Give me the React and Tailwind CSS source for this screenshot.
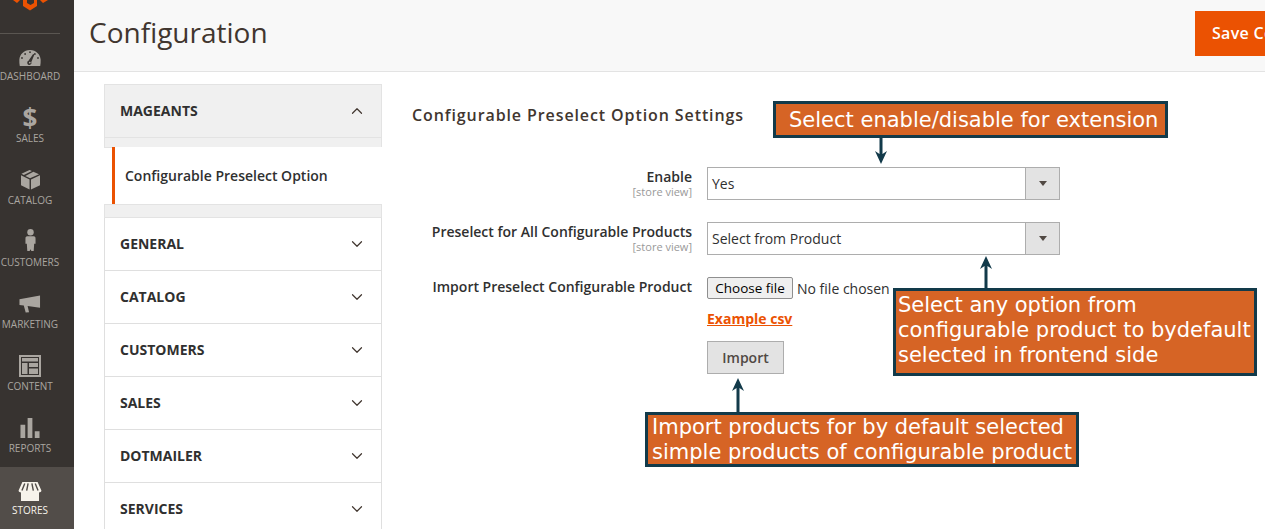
import { ChevronDown, ChevronUp } from 'lucide-react';

const SECTIONS = ['GENERAL', 'CATALOG', 'CUSTOMERS', 'SALES', 'DOTMAILER', 'SERVICES'];

const iconFill = '#aaa6a0';

const NAV = [
  {
    label: 'DASHBOARD',
    icon: (
      <svg width="22" height="16" viewBox="0 0 24 18" fill={iconFill} className="mt-[4px]">
        <path fillRule="evenodd" d="M12 0C5 0 .5 5 0 11c-.1 2.500.1 5 .5 7h23c.4-2 .6-4.500.5-7C23.500 5 19 0 12 0zM12 1.500a1 1 0 110 2 1 1 0 010-2zM6.500 3.500a1 1 0 110 2 1 1 0 010-2zM3 8a1 1 0 110 2 1 1 0 010-2zM21 8a1 1 0 110 2 1 1 0 010-2zM17.500 3.500a1 1 0 110 2 1 1 0 010-2z" />
        <path d="M15.500 4.500l1.500.7-3.500 8.300a2.400 2.400 0 11-3.200-1.300z" fill="#373330" />
        <circle cx="11.800" cy="14.200" r="1" fill={iconFill} />
      </svg>
    ),
  },
  {
    label: 'SALES',
    icon: <span className="text-[26px] leading-[26px] font-bold text-[#aaa6a0]">$</span>,
  },
  {
    label: 'CATALOG',
    icon: (
      <svg width="19" height="20" viewBox="0 0 20 21" fill={iconFill}>
        <path d="M9 0L.5 4l2.500 1.300L11.500 1zM13 1.800L4.600 6.200 9.500 8.700 19 4.500zM0 5.500l9 4.500v10.500L0 16zM10.500 10L20 5.500V16l-9.500 4.500z" />
      </svg>
    ),
  },
  {
    label: 'CUSTOMERS',
    icon: (
      <svg width="11" height="24" viewBox="0 0 12 24" fill={iconFill} className="mb-[5px]">
        <circle cx="6" cy="3.500" r="3.500" />
        <path d="M2.500 8h7c1.500 0 2 1 2 2.500V16H10l-.5 8H7l-1-2-1 2H2.500L2 16H.5v-5.500C.5 9 1 8 2.500 8z" />
      </svg>
    ),
  },
  {
    label: 'MARKETING',
    icon: (
      <svg width="22" height="18" viewBox="0 0 23 18" fill={iconFill}>
        <path d="M22 0v13L9 11l1.500 6.500-3.500.5-2-7.500-4.500-.5V4z" />
      </svg>
    ),
  },
  {
    label: 'CONTENT',
    icon: (
      <svg width="22" height="22" viewBox="0 0 22 22" fill={iconFill}>
        <path fillRule="evenodd" d="M0 0h22v22H0zM2 2v18h18V2z" />
        <path d="M3 3h16v3.500H3zM3 8h5.500v11H3zM10 8h9v4h-9zM10 13.500h9V19h-9z" />
      </svg>
    ),
  },
  {
    label: 'REPORTS',
    icon: (
      <svg width="20" height="20" viewBox="0 0 20 21" fill={iconFill}>
        <path d="M0 7h5v14H0zM7.500 0h5v21h-5zM15 14h5v7h-5z" />
      </svg>
    ),
  },
  {
    label: 'STORES',
    active: true,
    icon: (
      <svg width="24" height="19" viewBox="0 0 24 20" fill="#f7f3eb" className="mt-[2px]">
        <path d="M4 0h16l4 9c0 1.500-1.500 2-2.500 2v9h-19v-9C1.500 11 0 10.500 0 9z" />
        <path d="M6.500 1.500L3.500 9M10 1.500L8.500 9M14 1.500L15.500 9M17.500 1.500L20.500 9" stroke="#524d49" strokeWidth="1.500" fill="none" />
      </svg>
    ),
  },
];

function Sidebar() {
  return (
    <aside className="w-[74px] shrink-0 bg-[#373330] flex flex-col h-[529px] overflow-hidden">
      <div className="h-[34px] relative shrink-0 border-b border-[#5a5651] mr-[14px]">
        <svg className="absolute left-[13px] top-0" width="35" height="11" viewBox="0 0 35 11">
          <path d="M0 0h7L4 3zM27 0h8l-5 3zM10 0h4v3l3.500 2L21 3V0h3v6l-7 4.500L10 6z" fill="#eb5202" />
        </svg>
      </div>
      <nav className="flex flex-col -mt-[1px]">
        {NAV.map((n) => (
          <div
            key={n.label}
            className={`flex flex-col items-center h-[62px] pt-[10px] pr-[14px] ${
              n.active ? 'bg-[#524d49] text-[#f7f3eb]' : 'text-[#aaa6a0]'
            }`}
          >
            <div className="flex items-center justify-center h-[26px]">{n.icon}</div>
            <span className="text-[10px] leading-[14px] whitespace-nowrap">{n.label}</span>
          </div>
        ))}
      </nav>
    </aside>
  );
}

function SectionRow({ title }) {
  return (
    <div className="h-[53px] shrink-0 border-b border-[#dfdfdf] flex items-center justify-between pl-[15px] pr-[15px] pb-[2px] bg-white">
      <span className="font-bold text-[14px] text-[#303030]">{title}</span>
      <ChevronDown size={18} strokeWidth={1.600} className="text-[#41362f] mt-[2px]" />
    </div>
  );
}

function ConfigTabs() {
  return (
    <div className="w-[278px] shrink-0 flex flex-col">
      <div className="h-[54px] bg-[#f0f0f0] border border-[#e3e3e3] flex items-center justify-between pl-[15px] pr-[15px] pb-[2px]">
        <span className="font-bold text-[14px] text-[#303030]">MAGEANTS</span>
        <ChevronUp size={18} strokeWidth={1.600} className="text-[#41362f] mt-[2px]" />
      </div>
      <div className="h-[10px] bg-[#f0f0f0] border-x border-b border-[#e3e3e3]" />
      <div className="h-[58px] -mt-[1px] ml-[8px] border-l-[3px] border-[#eb5202] bg-white flex items-center pl-[10px] pb-[2px] text-[14px] font-semibold text-[#303030]">
        Configurable Preselect Option
      </div>
      <div className="h-[14px] -mt-[1px] bg-[#f0f0f0] border border-[#e3e3e3]" />
      <div className="flex flex-col border-x border-[#dfdfdf]">
        {SECTIONS.map((s) => (
          <SectionRow key={s} title={s} />
        ))}
      </div>
    </div>
  );
}

function FakeSelect({ value }) {
  return (
    <div className="w-[353px] h-[33px] border border-[#adadad] bg-white flex text-[14px] text-[#303030]">
      <span className="flex-1 pl-[4px] leading-[31px]">{value}</span>
      <span className="w-[34px] bg-[#e3e3e3] border-l border-[#adadad] flex items-center justify-center">
        <span className="w-0 h-0 border-x-[4px] border-x-transparent border-t-[5px] border-t-[#514943]" />
      </span>
    </div>
  );
}

function Label({ text, scope }) {
  return (
    <div className="w-[280px] text-right">
      <div className="text-[14px] leading-[19px] font-semibold text-[#303030]">{text}</div>
      {scope && <div className="text-[11px] leading-[12px] text-[#999]">[store view]</div>}
    </div>
  );
}

function Callout({ className, children }) {
  return (
    <div className={`absolute border-[3px] border-[#123a4a] bg-[#d66425] text-white font-['DejaVu_Sans',sans-serif] text-[21px] leading-[25px] whitespace-nowrap ${className}`}>
      {children}
    </div>
  );
}

// h is the drawn length of the arrow, tip included
function Arrow({ className, h, down }) {
  const shaft = h - 10;
  return (
    <svg className={`absolute ${className}`} width="12" height={h} viewBox={`0 0 12 ${h}`} fill="#123a4a">
      {down ? (
        <path d={`M4.500 0h3v${shaft}l4.500-3-6 ${13}-6-${13} 4.500 3z`} />
      ) : (
        <path d={`M4.500 ${h}h3V10l4.500 3-6-13-6 13 4.500-3z`} />
      )}
    </svg>
  );
}

export default function App() {
  return (
    <div className="relative w-[1265px] h-[529px] overflow-hidden flex bg-white font-['Open_Sans',sans-serif]">
      <Sidebar />
      <main className="flex-1 min-w-0 flex flex-col">
        <header className="h-[72px] shrink-0 bg-[#f8f8f8] border-b border-[#e3e3e3] flex items-center justify-between pl-[15px]">
          <h1 className="text-[28px] text-[#41362f] leading-[36px] mb-[8px]">Configuration</h1>
          <button className="w-[70px] h-[45px] mb-[5px] bg-[#eb5202] text-white font-semibold text-[16px] tracking-[0.3px] pl-[17px] text-left whitespace-nowrap overflow-hidden">
            Save Config
          </button>
        </header>
        <div className="flex pl-[30px] pt-[12px]">
          <ConfigTabs />
          <section className="pl-[30px] pt-[20px] flex flex-col">
            <h2 className="text-[16px] leading-[22px] font-semibold tracking-[0.9px] text-[#41362f]">
              Configurable Preselect Option Settings
            </h2>
            <div className="mt-[41px] flex gap-[15px] items-start">
              <Label text="Enable" scope />
              <FakeSelect value="Yes" />
            </div>
            <div className="mt-[22px] flex gap-[15px] items-start">
              <Label text="Preselect for All Configurable Products" scope />
              <FakeSelect value="Select from Product" />
            </div>
            <div className="mt-[22px] flex gap-[15px] items-start">
              <Label text="Import Preselect Configurable Product" />
              <div className="flex flex-col items-start">
                <div className="flex items-center gap-[4px] text-[14px] text-[#303030]">
                  <button className="h-[22px] w-[86px] rounded-[2px] border border-[#8f8f8f] bg-[#efefef] text-[13.500px] leading-[20px] text-black">
                    Choose file
                  </button>
                  <span>No file chosen</span>
                </div>
                <a className="mt-[10px] text-[14px] leading-[19px] font-bold text-[#eb5202] underline">Example csv</a>
                <button className="mt-[13px] w-[77px] h-[33px] border border-[#adadad] bg-[#e3e3e3] text-[14px] font-semibold text-[#514943]">
                  Import
                </button>
              </div>
            </div>
          </section>
        </div>
      </main>

      <Callout className="left-[773px] top-[101px] w-[395px] h-[37px] pl-[13px] leading-[33px]">
        Select enable/disable for extension
      </Callout>
      <Arrow down h={27} className="left-[875px] top-[137px]" />
      <Callout className="left-[893px] top-[288px] w-[364px] h-[88px] pl-[2px] pt-[2px]">
        Select any option from
        <br />
        configurable product to bydefault
        <br />
        selected in frontend side
      </Callout>
      <Arrow h={33} className="left-[980px] top-[256px]" />
      <Callout className="left-[645px] top-[412px] w-[434px] h-[55px] pl-[4px]">
        Import products for by default selected
        <br />
        simple products of configurable product
      </Callout>
      <Arrow h={35} className="left-[732px] top-[378px]" />
    </div>
  );
}
